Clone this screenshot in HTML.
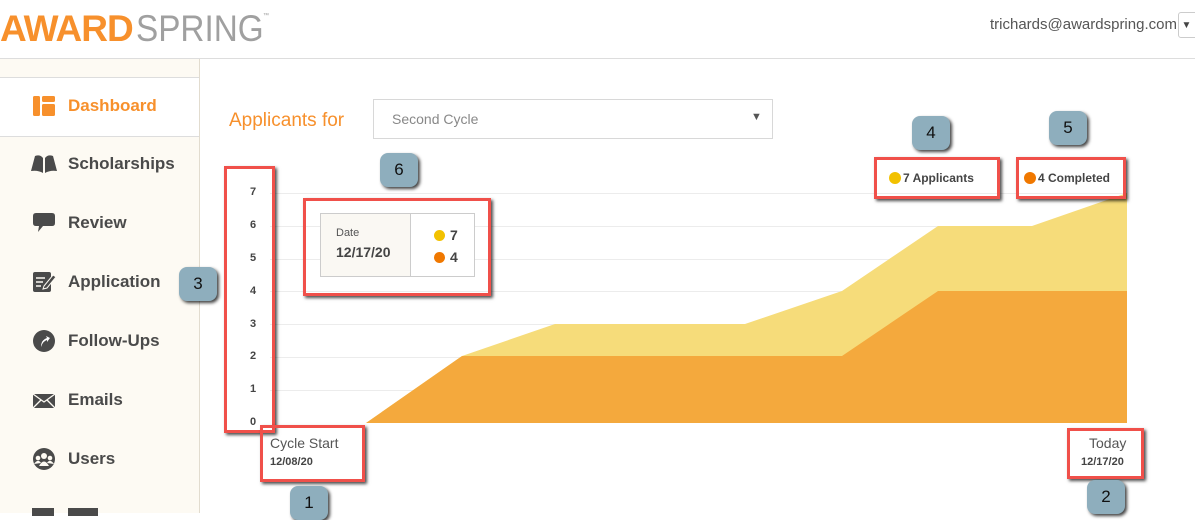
<!DOCTYPE html>
<html><head><meta charset="utf-8"><style>
body{margin:0;width:1195px;height:513px;overflow:hidden;background:#fff;font-family:"Liberation Sans",sans-serif;position:relative}
.a{position:absolute}
.nav{position:absolute;left:68px;font-size:17px;font-weight:bold;color:#4a4a4a}
.ic{position:absolute;left:32px;width:24px;height:22px}
.red{position:absolute;border:3px solid #f0504a;box-shadow:2px 2px 3px rgba(0,0,0,.7)}
.badge{position:absolute;width:38px;height:34px;background:#8eaebd;border-radius:8px;box-shadow:2px 2px 3px rgba(0,0,0,.75);font-size:17px;color:#111;text-align:center;line-height:34px}
.yl{position:absolute;left:246px;width:14px;text-align:center;font-size:11px;font-weight:bold;color:#444}
</style></head><body>
<div class="a" style="left:0;top:8px;font-size:37px;font-weight:bold;color:#f7902c;letter-spacing:-1px">AWARD</div>
<div class="a" style="left:136px;top:8px;font-size:37px;color:#a0a0a0;transform:scaleX(0.9);transform-origin:0 0">SPRING</div>
<div class="a" style="left:263px;top:13px;font-size:6px;color:#999">™</div>
<div class="a" style="left:990px;top:16px;font-size:15px;color:#555">trichards@awardspring.com</div>
<div class="a" style="left:1178px;top:12px;width:20px;height:26px;border:1px solid #ccc;border-radius:3px;font-size:10px;color:#444;line-height:26px;text-align:center;box-sizing:border-box;padding-right:3px">▼</div>
<div class="a" style="left:0;top:58px;width:1195px;height:1px;background:#ddd"></div>
<div class="a" style="left:0;top:59px;width:199px;height:454px;background:#fdfaf3;border-right:1px solid #e2dccf"></div>
<div class="a" style="left:0;top:77px;width:199px;height:58px;background:#fff;border-top:1px solid #ddd;border-bottom:1px solid #ddd"></div>
<svg class="ic" style="top:95px" viewBox="0 0 24 22"><rect x="1" y="1" width="7" height="20" rx="1.5" fill="#f7902c"/><rect x="10" y="1" width="13" height="6" rx="1.5" fill="#f7902c"/><rect x="10" y="9" width="13" height="12" rx="1.5" fill="#f7902c"/></svg>
<div class="nav" style="top:96px;color:#f7902c">Dashboard</div>
<svg class="ic" style="top:153px;left:30px;width:28px" viewBox="0 0 28 22"><path d="M1 18 L5 3 Q10 1 13 5 L13 20 Q8 17 1 18Z M27 18 L23 3 Q18 1 15 5 L15 20 Q20 17 27 18Z" fill="#4a4a4a"/></svg>
<div class="nav" style="top:154px">Scholarships</div>
<svg class="ic" style="top:212px" viewBox="0 0 24 22"><path d="M4 1 H20 Q23 1 23 4 V11 Q23 14 20 14 H11 L6 20 L7 14 H4 Q1 14 1 11 V4 Q1 1 4 1Z" fill="#4a4a4a"/></svg>
<div class="nav" style="top:213px">Review</div>
<svg class="ic" style="top:271px" viewBox="0 0 24 22"><rect x="1" y="1" width="18" height="20" rx="2" fill="#4a4a4a"/><path d="M4 7H13M4 11H11M4 15H9" stroke="#fdfaf3" stroke-width="1.5"/><path d="M12 15 L21 4 L24 6 L15 17 L11 18Z" fill="#4a4a4a" stroke="#fdfaf3" stroke-width="1"/></svg>
<div class="nav" style="top:272px">Application</div>
<svg class="ic" style="top:330px" viewBox="0 0 24 22"><circle cx="12" cy="11" r="11" fill="#4a4a4a"/><path d="M9 17 Q9 10 15 8 L14 6 L18 8 L15 12 L15 10 Q11 11 9 17Z" fill="#fff"/></svg>
<div class="nav" style="top:331px">Follow-Ups</div>
<svg class="ic" style="top:390px" viewBox="0 0 24 22"><rect x="1" y="4" width="22" height="14" fill="#4a4a4a"/><path d="M1 4 L12 12 L23 4 M1 18 L9 10 M23 18 L15 10" stroke="#fdfaf3" stroke-width="1.3" fill="none"/></svg>
<div class="nav" style="top:390px">Emails</div>
<svg class="ic" style="top:448px" viewBox="0 0 24 22"><circle cx="12" cy="11" r="11" fill="#4a4a4a"/><circle cx="12" cy="8" r="3" fill="#fdfaf3"/><circle cx="6" cy="10" r="2.3" fill="#fdfaf3"/><circle cx="18" cy="10" r="2.3" fill="#fdfaf3"/><path d="M7 18 Q12 9 17 18Z M2 16 Q6 10 9 15Z M22 16 Q18 10 15 15Z" fill="#fdfaf3"/></svg>
<div class="nav" style="top:449px">Users</div>
<div class="a" style="left:32px;top:508px;width:22px;height:8px;background:#4a4a4a"></div>
<div class="a" style="left:68px;top:508px;width:30px;height:8px;background:#4a4a4a"></div>
<div class="a" style="left:229px;top:110px;font-size:19px;color:#f7902c">Applicants for</div>
<div class="a" style="left:373px;top:99px;width:400px;height:40px;border:1px solid #d8d8d8;box-sizing:border-box"></div>
<div class="a" style="left:392px;top:111px;font-size:14px;color:#888">Second Cycle</div>
<div class="a" style="left:751px;top:111px;font-size:11px;color:#555">▼</div>
<svg class="a" style="left:0;top:0" width="1195" height="513">
<g stroke="#ececec" stroke-width="1">
<line x1="270" x2="1127" y1="193.5" y2="193.5"/><line x1="270" x2="1127" y1="226.5" y2="226.5"/><line x1="270" x2="1127" y1="259.5" y2="259.5"/><line x1="270" x2="1127" y1="291.5" y2="291.5"/><line x1="270" x2="1127" y1="324.5" y2="324.5"/><line x1="270" x2="1127" y1="357.5" y2="357.5"/><line x1="270" x2="1127" y1="390.5" y2="390.5"/>
</g>
<polygon points="366,423 462,356 555,324 745,324 842,291 938,226 1032,226 1127,193 1127,423" fill="#f6dc7a"/>
<polygon points="366,423 462,356 842,356 938,291 1127,291 1127,423" fill="#f4a93d"/>
</svg>
<div class="yl" style="top:186px">7</div><div class="yl" style="top:219px">6</div><div class="yl" style="top:252px">5</div><div class="yl" style="top:285px">4</div><div class="yl" style="top:318px">3</div><div class="yl" style="top:350px">2</div><div class="yl" style="top:383px">1</div><div class="yl" style="top:416px">0</div>
<div class="a" style="left:270px;top:435px;font-size:14px;color:#555">Cycle Start</div>
<div class="a" style="left:270px;top:456px;font-size:11px;font-weight:bold;color:#444">12/08/20</div>
<div class="a" style="left:1089px;top:435px;font-size:14px;color:#555">Today</div>
<div class="a" style="left:1081px;top:456px;font-size:11px;font-weight:bold;color:#444">12/17/20</div>
<div class="a" style="left:889px;top:172px;width:12px;height:12px;border-radius:6px;background:#f2c100"></div>
<div class="a" style="left:903px;top:171px;font-size:12px;font-weight:bold;color:#444">7 Applicants</div>
<div class="a" style="left:1024px;top:172px;width:12px;height:12px;border-radius:6px;background:#f07800"></div>
<div class="a" style="left:1038px;top:171px;font-size:12px;font-weight:bold;color:#444">4 Completed</div>
<div class="a" style="left:320px;top:213px;width:155px;height:64px;border:1px solid #ccc;background:#fff;box-sizing:border-box"></div>
<div class="a" style="left:321px;top:214px;width:89px;height:62px;background:#faf8f3;border-right:1px solid #ccc"></div>
<div class="a" style="left:336px;top:227px;font-size:11px;color:#555">Date</div>
<div class="a" style="left:336px;top:244px;font-size:14px;font-weight:bold;color:#444">12/17/20</div>
<div class="a" style="left:434px;top:230px;width:11px;height:11px;border-radius:6px;background:#f2c100"></div>
<div class="a" style="left:450px;top:227px;font-size:14px;font-weight:bold;color:#444">7</div>
<div class="a" style="left:434px;top:252px;width:11px;height:11px;border-radius:6px;background:#f07800"></div>
<div class="a" style="left:450px;top:249px;font-size:14px;font-weight:bold;color:#444">4</div>
<div class="red" style="left:224px;top:166px;width:45px;height:261px"></div>
<div class="red" style="left:260px;top:425px;width:99px;height:51px"></div>
<div class="red" style="left:1067px;top:428px;width:71px;height:45px"></div>
<div class="red" style="left:303px;top:198px;width:182px;height:92px"></div>
<div class="red" style="left:874px;top:157px;width:120px;height:36px"></div>
<div class="red" style="left:1016px;top:157px;width:104px;height:36px"></div>
<div class="badge" style="left:179px;top:267px">3</div>
<div class="badge" style="left:380px;top:153px">6</div>
<div class="badge" style="left:912px;top:116px">4</div>
<div class="badge" style="left:1049px;top:111px">5</div>
<div class="badge" style="left:290px;top:486px">1</div>
<div class="badge" style="left:1087px;top:480px">2</div>
</body></html>
